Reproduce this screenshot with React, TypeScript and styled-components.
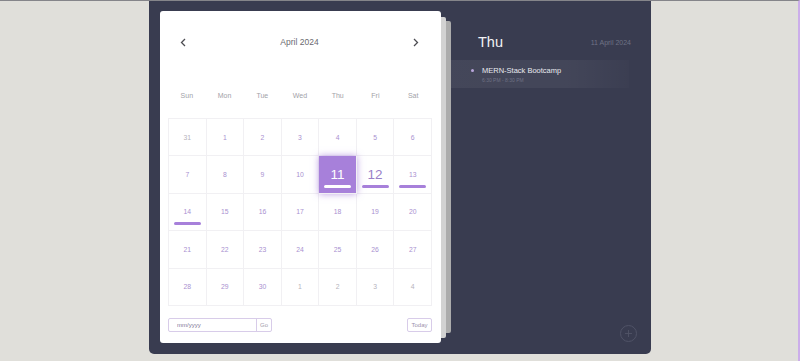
import React from 'react'
import styled, { createGlobalStyle, css } from 'styled-components'

const GlobalStyle = createGlobalStyle`
  html, body {
    margin: 0;
    padding: 0;
    background: #e0dfda;
    font-family: 'Liberation Sans', Arial, sans-serif;
  }
`

const Page = styled.div`
  display: flex;
  box-sizing: border-box;
  width: 800px;
  height: 361px;
  padding-left: 149px;
  border-top: 1px solid #85858a;
  border-right: 2px solid #ccaeea;
  background: #e0dfda;
`

const Shell = styled.div`
  display: flex;
  box-sizing: border-box;
  width: 502px;
  height: 353px;
  padding: 10px 0 0 11px;
  background: #393c50;
  border-radius: 0 0 5px 5px;
`

const CardStack = styled.div`
  position: relative;
  width: 281px;
  height: 332px;
  margin-right: 10px;

  &::before,
  &::after {
    content: '';
    position: absolute;
    left: 0;
    border-radius: 2px;
  }
  &::before {
    top: 6px;
    bottom: 5px;
    right: -5px;
    background: #d2d2d2;
    z-index: 1;
  }
  &::after {
    top: 10px;
    bottom: 10px;
    right: -10px;
    background: #acacac;
    z-index: 0;
  }
`

const Card = styled.div`
  position: relative;
  z-index: 2;
  display: flex;
  flex-direction: column;
  box-sizing: border-box;
  height: 100%;
  padding: 20px 9px 0 8px;
  background: #fff;
  border-radius: 3px;
`

const Header = styled.div`
  display: flex;
  align-items: center;
  justify-content: space-between;
  height: 22px;
  padding: 0 11px 0 10px;
`

const MonthTitle = styled.span`
  font-size: 8.5px;
  color: #6a6a70;
`

const NavButton = styled.button`
  display: flex;
  align-items: center;
  justify-content: center;
  width: 10px;
  height: 12px;
  padding: 0;
  border: none;
  background: none;
  cursor: pointer;
`

const WeekRow = styled.div`
  display: grid;
  grid-template-columns: repeat(7, 1fr);
  height: 20px;
  margin: 32px 0 13px;
  align-items: center;
`

const WeekDay = styled.span`
  font-size: 7px;
  color: #a2a2a8;
  text-align: center;
`

const Grid = styled.div`
  display: grid;
  grid-template-columns: repeat(7, 1fr);
  grid-auto-rows: 37.4px;
  border-top: 1px solid #f1f0f3;
  border-left: 1px solid #f1f0f3;
`

const Cell = styled.div<{ $today?: boolean; $muted?: boolean; $selected?: boolean }>`
  position: relative;
  display: flex;
  align-items: center;
  justify-content: center;
  border-right: 1px solid #f1f0f3;
  border-bottom: 1px solid #f1f0f3;
  font-size: 6.8px;
  color: ${({ $muted }) => ($muted ? '#b5b3bc' : '#a991d0')};
  cursor: pointer;

  ${({ $selected }) =>
    $selected &&
    css`
      font-size: 13.5px;
      color: #9a7fc8;
    `}

  ${({ $today }) =>
    $today &&
    css`
      z-index: 1;
      font-size: 13.5px;
      color: #fff;
      background: #a780da;
      box-shadow: 0 0 7px rgba(167, 128, 218, 0.75);
    `}
`

const EventBar = styled.span<{ $light?: boolean }>`
  position: absolute;
  left: 50%;
  bottom: 5px;
  width: 27px;
  height: 3px;
  margin-left: -13.5px;
  border-radius: 2px;
  background: ${({ $light }) => ($light ? '#ffffff' : '#a780da')};
`

const Footer = styled.div`
  display: flex;
  align-items: center;
  justify-content: space-between;
  height: 14px;
  margin-top: 12px;
`

const DateForm = styled.div`
  display: flex;
  box-sizing: border-box;
  width: 104px;
  height: 14px;
  border: 1px solid #d8cce9;
  border-radius: 2px;
`

const DateInput = styled.input`
  flex: 1;
  min-width: 0;
  box-sizing: border-box;
  padding: 0 0 0 8px;
  border: none;
  outline: none;
  background: transparent;
  font-family: inherit;
  font-size: 6px;
  color: #7d7592;

  &::placeholder {
    color: #7d7592;
  }
`

const GoButton = styled.button`
  width: 15px;
  padding: 0;
  border: none;
  border-left: 1px solid #d8cce9;
  background: none;
  font-family: inherit;
  font-size: 6px;
  color: #a3a0aa;
`

const TodayButton = styled.button`
  box-sizing: border-box;
  width: 25px;
  height: 14px;
  padding: 0;
  border: 1px solid #d8cce9;
  border-radius: 2px;
  background: #fff;
  font-family: inherit;
  font-size: 6px;
  color: #9c92ad;
`

const Side = styled.div`
  display: flex;
  flex-direction: column;
  flex: 1;
  padding-bottom: 12px;
`

const SideHeader = styled.div`
  display: flex;
  align-items: center;
  justify-content: space-between;
  height: 22px;
  margin-top: 20px;
  padding: 0 20px 0 27px;
`

const DayName = styled.span`
  font-size: 14.5px;
  color: #f2f2f5;
`

const FullDate = styled.span`
  font-size: 7px;
  color: #6f7285;
`

const EventRow = styled.div`
  display: flex;
  align-items: flex-start;
  height: 28px;
  margin: 7px 22px 0 0;
  padding: 6px 0 0 20px;
  box-sizing: border-box;
  background: linear-gradient(90deg, rgba(255, 255, 255, 0.055) 0%, rgba(255, 255, 255, 0.05) 65%, rgba(255, 255, 255, 0.01) 100%);
`

const Dot = styled.span`
  width: 3px;
  height: 3px;
  margin: 3px 8px 0 0;
  border-radius: 50%;
  background: #b9a6dc;
`

const EventText = styled.div`
  display: flex;
  flex-direction: column;
  gap: 2px;
`

const EventTitle = styled.span`
  font-size: 7.5px;
  color: #e9e9ef;
`

const EventTime = styled.span`
  font-size: 5px;
  color: #6f7285;
`

const AddButton = styled.button`
  display: flex;
  align-items: center;
  justify-content: center;
  align-self: flex-end;
  margin: auto 14px 0 0;
  width: 17px;
  height: 17px;
  padding: 0;
  border: 1px solid #505367;
  border-radius: 50%;
  background: none;
  cursor: pointer;
`

type Day = { n: number; muted?: boolean; today?: boolean; selected?: boolean; event?: boolean }

const days: Day[] = [
  { n: 31, muted: true },
  ...Array.from({ length: 30 }, (_, i) => ({ n: i + 1 })),
  { n: 1, muted: true },
  { n: 2, muted: true },
  { n: 3, muted: true },
  { n: 4, muted: true },
].map((d) => {
  if (d.muted) return d
  if (d.n === 11) return { ...d, today: true, event: true }
  if (d.n === 12) return { ...d, selected: true, event: true }
  if (d.n === 13 || d.n === 14) return { ...d, event: true }
  return d
})

const weekDays = ['Sun', 'Mon', 'Tue', 'Wed', 'Thu', 'Fri', 'Sat']

const Chevron = ({ dir }: { dir: 'left' | 'right' }) => (
  <svg width="6" height="9" viewBox="0 0 6 9">
    <path
      d={dir === 'left' ? 'M5 1 L1.5 4.5 L5 8' : 'M1 1 L4.5 4.5 L1 8'}
      fill="none"
      stroke="#4c4c52"
      strokeWidth="1.3"
    />
  </svg>
)

const App: React.FC = () => {
  return (
    <>
      <GlobalStyle />
      <Page>
        <Shell>
          <CardStack>
            <Card>
              <Header>
                <NavButton>
                  <Chevron dir="left" />
                </NavButton>
                <MonthTitle>April 2024</MonthTitle>
                <NavButton>
                  <Chevron dir="right" />
                </NavButton>
              </Header>
              <WeekRow>
                {weekDays.map((d) => (
                  <WeekDay key={d}>{d}</WeekDay>
                ))}
              </WeekRow>
              <Grid>
                {days.map((d, i) => (
                  <Cell key={i} $muted={d.muted} $today={d.today} $selected={d.selected}>
                    {d.n}
                    {d.event && <EventBar $light={d.today} />}
                  </Cell>
                ))}
              </Grid>
              <Footer>
                <DateForm>
                  <DateInput placeholder="mm/yyyy" />
                  <GoButton>Go</GoButton>
                </DateForm>
                <TodayButton>Today</TodayButton>
              </Footer>
            </Card>
          </CardStack>
          <Side>
            <SideHeader>
              <DayName>Thu</DayName>
              <FullDate>11 April 2024</FullDate>
            </SideHeader>
            <EventRow>
              <Dot />
              <EventText>
                <EventTitle>MERN-Stack Bootcamp</EventTitle>
                <EventTime>6:30 PM - 8:30 PM</EventTime>
              </EventText>
            </EventRow>
            <AddButton>
              <svg width="9" height="9" viewBox="0 0 9 9">
                <path d="M4.5 1 V8 M1 4.5 H8" stroke="#505367" strokeWidth="0.9" />
              </svg>
            </AddButton>
          </Side>
        </Shell>
      </Page>
    </>
  )
}

export default App
